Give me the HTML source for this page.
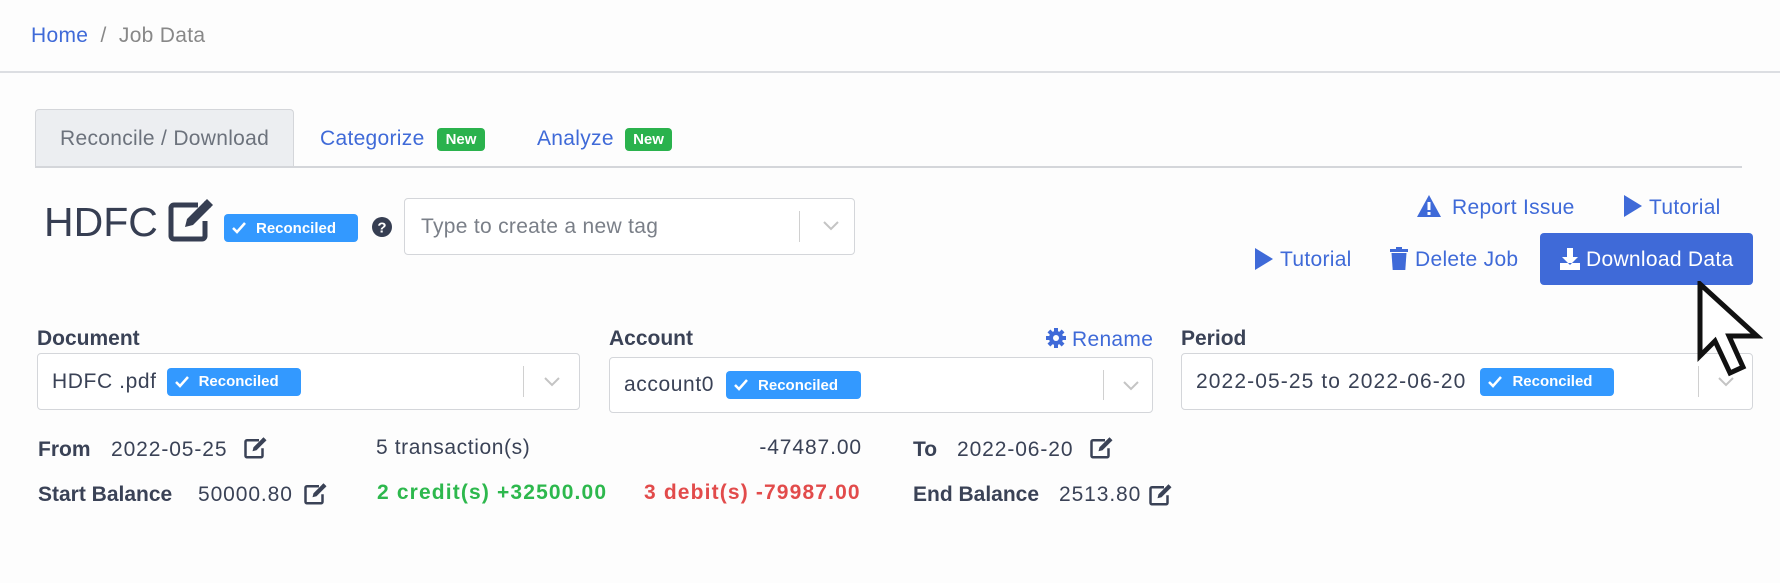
<!DOCTYPE html>
<html><head><meta charset="utf-8"><style>
*{box-sizing:border-box;margin:0;padding:0}
body{width:1780px;height:583px;background:#fdfdfd;font-family:"Liberation Sans",sans-serif;color:#3a4256;position:relative;overflow:hidden}
.a{position:absolute;white-space:nowrap}
.blue{color:#3f6ad8}
.badge{background:#3399ff;color:#fff;border-radius:4px;font-weight:bold;font-size:15px;display:inline-flex;align-items:center;padding-left:8px;height:28px;letter-spacing:0}
.badge svg{margin-right:10px}
.new{position:absolute;background:#2ab24d;color:#fff;border-radius:4px;font-weight:bold;font-size:15px;display:flex;align-items:center;justify-content:center}
.sel{position:absolute;border:1.5px solid #d4d6da;border-radius:4px;background:#fff}
.in{position:absolute;left:14px;top:0;bottom:0;display:flex;align-items:center;font-size:21px;letter-spacing:.6px}
.sep{position:absolute;top:12px;bottom:12px;width:1px;background:#d0d0d0}
.lbl{font-weight:bold;font-size:21px}
.t{font-size:21px;letter-spacing:.3px}
.n{font-size:21px;letter-spacing:.9px}
</style></head><body>
<div class="a t" style="left:31px;top:24px"><span class="blue">Home</span><span style="color:#888"> &nbsp;/&nbsp; Job Data</span></div>
<div class="a" style="left:0;top:71px;width:1780px;height:2px;background:#dcdee2"></div>

<div class="a" style="left:35px;top:109px;width:259px;height:59px;background:#eceef1;border:1.5px solid #d4d6da;border-bottom:none;border-radius:4px 4px 0 0"></div>
<div class="a" style="left:35px;top:166px;width:1707px;height:2px;background:#d4d6da"></div>
<div class="a t" style="left:60px;top:127px;color:#6c727c">Reconcile / Download</div>
<div class="a t blue" style="left:320px;top:127px">Categorize</div>
<div class="new" style="left:437px;top:128px;width:48px;height:23px">New</div>
<div class="a t blue" style="left:537px;top:127px">Analyze</div>
<div class="new" style="left:625px;top:128px;width:47px;height:23px">New</div>

<div class="a" style="left:44px;top:199px;font-size:41px;color:#363e52">HDFC</div>
<svg class="a" style="left:168px;top:199px" width="48" height="43" viewBox="0 0 48 43"><path d="M30 6H6a3 3 0 0 0-3 3v28a3 3 0 0 0 3 3h28a3 3 0 0 0 3-3V22" fill="none" stroke="#363e52" stroke-width="5"/><path d="M17 28l2-8 18-18 6 6-18 18z" fill="#363e52"/><path d="M39 0l6 6-3 3-6-6z" fill="#363e52"/></svg>
<div class="badge a" style="left:224px;top:214px;width:134px"><svg width="14" height="12" viewBox="0 0 14 12"><path d="M1 6l4 4 8-9" fill="none" stroke="#fff" stroke-width="2.5"/></svg>Reconciled</div>
<svg class="a" style="left:372px;top:217px" width="20" height="20" viewBox="0 0 20 20"><circle cx="10" cy="10" r="10" fill="#363e52"/><text x="10" y="15.5" text-anchor="middle" font-family="Liberation Sans" font-weight="bold" font-size="15" fill="#fff">?</text></svg>
<div class="sel" style="left:404px;top:198px;width:451px;height:57px"><div class="a t" style="left:16px;top:16px;color:#7a7f88">Type to create a new tag</div><div class="sep" style="left:394px"></div><svg class="a" style="left:418px;top:22px" width="16" height="10"><path d="M1 1l7 7 7-7" fill="none" stroke="#c4c4c4" stroke-width="2"/></svg></div>

<svg class="a" style="left:1416px;top:194px" width="26" height="24" viewBox="0 0 26 24"><path d="M13 1L25 23H1z" fill="#3f6ad8"/><rect x="11.5" y="8" width="3" height="8" fill="#fff"/><rect x="11.5" y="18" width="3" height="3" fill="#fff"/></svg>
<div class="a t blue" style="left:1452px;top:196px">Report Issue</div>
<svg class="a" style="left:1624px;top:195px" width="18" height="22"><path d="M0 0L18 11L0 22z" fill="#3f6ad8"/></svg>
<div class="a t blue" style="left:1649px;top:196px">Tutorial</div>

<svg class="a" style="left:1255px;top:248px" width="18" height="22"><path d="M0 0L18 11L0 22z" fill="#3f6ad8"/></svg>
<div class="a t blue" style="left:1280px;top:248px">Tutorial</div>
<svg class="a" style="left:1390px;top:247px" width="18" height="23" viewBox="0 0 18 23"><rect x="0" y="2" width="18" height="3" fill="#3f6ad8"/><rect x="6" y="0" width="6" height="3" fill="#3f6ad8"/><path d="M1.5 6h15l-1.2 17H2.7z" fill="#3f6ad8"/></svg>
<div class="a t blue" style="left:1415px;top:248px">Delete Job</div>
<div class="a" style="left:1540px;top:233px;width:213px;height:52px;background:#3f6ad8;border-radius:4px"></div>
<svg class="a" style="left:1560px;top:248px" width="20" height="22" viewBox="0 0 20 22"><path d="M7 0h6v9h5l-8 8-8-8h5z" fill="#fff"/><rect x="0" y="15" width="20" height="7" fill="#fff"/><path d="M8 15l2 2 2-2" fill="#3f6ad8"/></svg>
<div class="a t" style="left:1586px;top:248px;color:#fff">Download Data</div>

<div class="a lbl" style="left:37px;top:327px">Document</div>
<div class="sel" style="left:37px;top:353px;width:543px;height:57px"><div class="in">HDFC .pdf<span style="width:10px"></span><span class="badge" style="width:134px"><svg width="14" height="12" viewBox="0 0 14 12"><path d="M1 6l4 4 8-9" fill="none" stroke="#fff" stroke-width="2.5"/></svg>Reconciled</span></div><div class="sep" style="left:485px"></div><svg class="a" style="left:506px;top:23px" width="16" height="10"><path d="M1 1l7 7 7-7" fill="none" stroke="#c4c4c4" stroke-width="2"/></svg></div>

<div class="a lbl" style="left:609px;top:327px">Account</div>
<svg class="a" style="left:1046px;top:328px" width="20" height="20" viewBox="0 0 20 20"><g fill="#3f6ad8"><circle cx="10" cy="10" r="7"/><rect x="8" y="0" width="4" height="20"/><rect x="0" y="8" width="20" height="4"/><rect x="8" y="0" width="4" height="20" transform="rotate(45 10 10)"/><rect x="8" y="0" width="4" height="20" transform="rotate(-45 10 10)"/></g><circle cx="10" cy="10" r="3" fill="#fff"/></svg>
<div class="a t blue" style="left:1072px;top:328px">Rename</div>
<div class="sel" style="left:609px;top:357px;width:544px;height:56px"><div class="in">account0<span style="width:12px"></span><span class="badge" style="width:135px"><svg width="14" height="12" viewBox="0 0 14 12"><path d="M1 6l4 4 8-9" fill="none" stroke="#fff" stroke-width="2.5"/></svg>Reconciled</span></div><div class="sep" style="left:493px"></div><svg class="a" style="left:513px;top:23px" width="16" height="10"><path d="M1 1l7 7 7-7" fill="none" stroke="#c4c4c4" stroke-width="2"/></svg></div>

<div class="a lbl" style="left:1181px;top:327px">Period</div>
<div class="sel" style="left:1181px;top:353px;width:572px;height:57px"><div class="in" style="letter-spacing:1.1px">2022-05-25 to 2022-06-20<span style="width:14px"></span><span class="badge" style="width:134px"><svg width="14" height="12" viewBox="0 0 14 12"><path d="M1 6l4 4 8-9" fill="none" stroke="#fff" stroke-width="2.5"/></svg>Reconciled</span></div><div class="sep" style="left:516px"></div><svg class="a" style="left:536px;top:23px" width="16" height="10"><path d="M1 1l7 7 7-7" fill="none" stroke="#c4c4c4" stroke-width="2"/></svg></div>

<svg class="a" style="left:1693px;top:281px" width="70" height="96" viewBox="0 0 70 96"><path d="M7 3L7 75L22 60L37 92L50 86L36 55L64 55Z" fill="#fff" stroke="#111" stroke-width="5" stroke-linejoin="miter"/></svg>

<div class="a lbl" style="left:38px;top:438px">From</div>
<div class="a n" style="left:111px;top:438px">2022-05-25</div>
<div class="a n" style="left:376px;top:436px;letter-spacing:.6px">5 transaction(s)</div>
<div class="a n" style="left:742px;top:436px;width:120px;text-align:right">-47487.00</div>
<div class="a lbl" style="left:913px;top:438px">To</div>
<div class="a n" style="left:957px;top:438px">2022-06-20</div>

<div class="a lbl" style="left:38px;top:483px">Start Balance</div>
<div class="a n" style="left:198px;top:483px">50000.80</div>
<div class="a n" style="left:377px;top:481px;color:#2db84d;font-weight:bold;letter-spacing:1.15px">2 credit(s) +32500.00</div>
<div class="a n" style="left:644px;top:481px;color:#e24b4b;font-weight:bold;letter-spacing:1.15px">3 debit(s) -79987.00</div>
<div class="a lbl" style="left:913px;top:483px">End Balance</div>
<div class="a n" style="left:1059px;top:483px">2513.80</div>

<svg class="a" style="left:244px;top:437px" width="24" height="22" viewBox="0 0 48 43"><path d="M30 6H6a3 3 0 0 0-3 3v28a3 3 0 0 0 3 3h28a3 3 0 0 0 3-3V22" fill="none" stroke="#3a4256" stroke-width="5"/><path d="M17 28l2-8 18-18 6 6-18 18z" fill="#3a4256"/><path d="M39 0l6 6-3 3-6-6z" fill="#3a4256"/></svg>
<svg class="a" style="left:304px;top:483px" width="24" height="22" viewBox="0 0 48 43"><path d="M30 6H6a3 3 0 0 0-3 3v28a3 3 0 0 0 3 3h28a3 3 0 0 0 3-3V22" fill="none" stroke="#3a4256" stroke-width="5"/><path d="M17 28l2-8 18-18 6 6-18 18z" fill="#3a4256"/><path d="M39 0l6 6-3 3-6-6z" fill="#3a4256"/></svg>
<svg class="a" style="left:1090px;top:437px" width="24" height="22" viewBox="0 0 48 43"><path d="M30 6H6a3 3 0 0 0-3 3v28a3 3 0 0 0 3 3h28a3 3 0 0 0 3-3V22" fill="none" stroke="#3a4256" stroke-width="5"/><path d="M17 28l2-8 18-18 6 6-18 18z" fill="#3a4256"/><path d="M39 0l6 6-3 3-6-6z" fill="#3a4256"/></svg>
<svg class="a" style="left:1149px;top:484px" width="24" height="22" viewBox="0 0 48 43"><path d="M30 6H6a3 3 0 0 0-3 3v28a3 3 0 0 0 3 3h28a3 3 0 0 0 3-3V22" fill="none" stroke="#3a4256" stroke-width="5"/><path d="M17 28l2-8 18-18 6 6-18 18z" fill="#3a4256"/><path d="M39 0l6 6-3 3-6-6z" fill="#3a4256"/></svg>
</body></html>
